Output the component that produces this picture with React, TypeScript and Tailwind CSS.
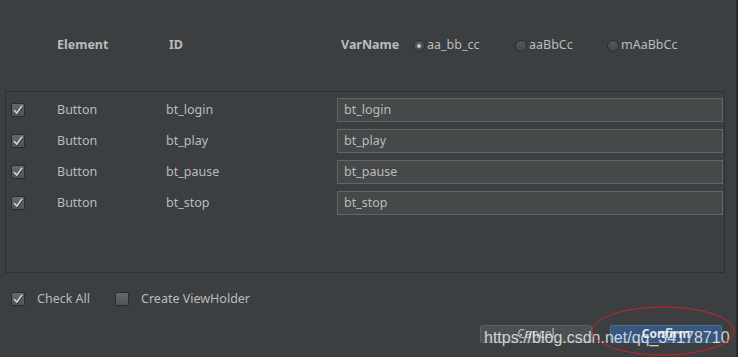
import React from "react";

const rows = [
  { type: "Button", id: "bt_login" },
  { type: "Button", id: "bt_play" },
  { type: "Button", id: "bt_pause" },
  { type: "Button", id: "bt_stop" },
];

function CheckBox({ checked }: { checked: boolean }) {
  return (
    <div className="w-[14px] h-[14px] rounded-[2px] border border-[#2a2c2e] bg-gradient-to-b from-[#66696b] to-[#505355] flex items-center justify-center shrink-0">
      {checked && (
        <svg width="12" height="12" viewBox="0 0 12 12">
          <path d="M2 6.2 L4.8 9.2 L10.2 1.8" fill="none" stroke="#2b2b2b" strokeWidth="2.2" transform="translate(0.4 0.6)" />
          <path d="M2 6.2 L4.8 9.2 L10.2 1.8" fill="none" stroke="#d0d0d0" strokeWidth="1.8" />
        </svg>
      )}
    </div>
  );
}

function Radio({ selected, label }: { selected: boolean; label: string }) {
  return (
    <div className="flex items-center gap-[2px]">
      <div className="w-[12px] h-[12px] rounded-full border border-[#2a2c2e] bg-gradient-to-b from-[#55585a] to-[#45484a] flex items-center justify-center">
        {selected && <div className="w-[4px] h-[4px] rounded-full bg-[#c8c8c8]" />}
      </div>
      <span>{label}</span>
    </div>
  );
}

export default function App() {
  return (
    <div
      className="relative w-[738px] h-[357px] bg-[#3c3f41] border-r-2 border-[#2b2b2b] text-[#bbbbbb] text-[12.5px] overflow-hidden"
      style={{ fontFamily: '"Noto Sans", "Open Sans", sans-serif' }}
    >
      {/* header */}
      <div className="h-[91px] flex items-center font-bold">
        <span className="ml-[57px] w-[112px]">Element</span>
        <span className="w-[172px]">ID</span>
        <span className="w-[72px]">VarName</span>
        <div className="flex items-center font-normal">
          <div className="w-[102px]">
            <Radio selected label="aa_bb_cc" />
          </div>
          <div className="w-[92px]">
            <Radio selected={false} label="aaBbCc" />
          </div>
          <Radio selected={false} label="mAaBbCc" />
        </div>
      </div>

      {/* table */}
      <div className="ml-[5px] w-[720px] h-[182px] border border-[#2e3032] pt-[6px] flex flex-col gap-[7px]">
        {rows.map((r) => (
          <div key={r.id} className="flex items-center h-[24px]">
            <div className="ml-[5px]">
              <CheckBox checked />
            </div>
            <span className="ml-[32px] w-[109px]">{r.type}</span>
            <span className="w-[171px]">{r.id}</span>
            <div className="w-[386px] h-[24px] bg-[#45494a] border border-[#646464] flex items-center px-[6px]">
              {r.id}
            </div>
          </div>
        ))}
      </div>

      {/* options */}
      <div className="mt-[19px] ml-[11px] flex items-center h-[14px]">
        <CheckBox checked />
        <span className="ml-[12px]">Check All</span>
        <div className="ml-[25px]">
          <CheckBox checked={false} />
        </div>
        <span className="ml-[12px]">Create ViewHolder</span>
      </div>

      {/* buttons */}
      <div className="mt-[19px] flex justify-end gap-[18px] pr-[14px]">
        <button className="w-[112px] h-[18px] rounded-[2px] border border-[#5e6163] bg-[#4c5052] text-[#bbbbbb] text-[12px] leading-none">
          Cancel
        </button>
        <button className="w-[112px] h-[18px] rounded-[2px] border border-[#4c708c] bg-[#365880] text-[#e6e6e6] font-bold text-[12px] leading-none">
          Confirm
        </button>
      </div>

      {/* watermark */}
      <div
        className="absolute left-[484px] top-[326px] text-[16px] text-white/75 whitespace-nowrap"
        style={{ fontFamily: '"Liberation Sans", Arial, sans-serif' }}
      >
        https://blog.csdn.net/qq_34178710
      </div>

      {/* annotation ellipse */}
      <svg className="absolute left-[590px] top-[305px]" width="148" height="52" viewBox="0 0 148 52">
        <ellipse cx="73" cy="26" rx="71" ry="24" fill="none" stroke="#d02020" strokeWidth="1" />
      </svg>
    </div>
  );
}
